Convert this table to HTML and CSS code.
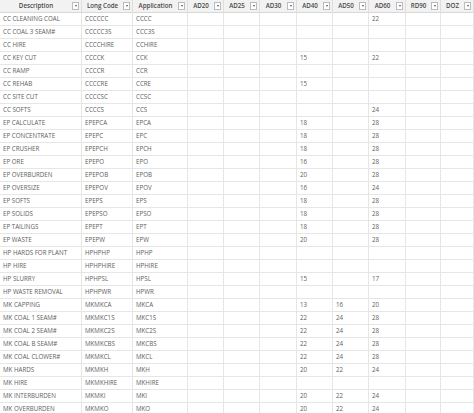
FILE: index.html
```html
<!DOCTYPE html>
<html>
<head>
<meta charset="utf-8">
<link rel="stylesheet" href="styles.css">
</head>
<body>
<div class="sheet">
  <div class="row head">
    <div class="th"><span class="lbl">Description</span><span class="dd"></span></div>
    <div class="th"><span class="lbl">Long Code</span><span class="dd"></span></div>
    <div class="th"><span class="lbl">Application</span><span class="dd"></span></div>
    <div class="th"><span class="lbl">AD20</span><span class="dd"></span></div>
    <div class="th"><span class="lbl">AD25</span><span class="dd"></span></div>
    <div class="th"><span class="lbl">AD30</span><span class="dd"></span></div>
    <div class="th"><span class="lbl">AD40</span><span class="dd"></span></div>
    <div class="th"><span class="lbl">AD50</span><span class="dd"></span></div>
    <div class="th"><span class="lbl">AD60</span><span class="dd"></span></div>
    <div class="th"><span class="lbl">RD90</span><span class="dd"></span></div>
    <div class="th"><span class="lbl">DOZ</span><span class="dd"></span></div>
  </div>
  <div class="row"><span>CC CLEANING COAL</span><span>CCCCCC</span><span>CCCC</span><span></span><span></span><span></span><span></span><span></span><span>22</span><span></span><span></span></div>
  <div class="row"><span>CC COAL 3 SEAM#</span><span>CCCCC3S</span><span>CCC3S</span><span></span><span></span><span></span><span></span><span></span><span></span><span></span><span></span></div>
  <div class="row"><span>CC HIRE</span><span>CCCCHIRE</span><span>CCHIRE</span><span></span><span></span><span></span><span></span><span></span><span></span><span></span><span></span></div>
  <div class="row"><span>CC KEY CUT</span><span>CCCCK</span><span>CCK</span><span></span><span></span><span></span><span>15</span><span></span><span>22</span><span></span><span></span></div>
  <div class="row"><span>CC RAMP</span><span>CCCCR</span><span>CCR</span><span></span><span></span><span></span><span></span><span></span><span></span><span></span><span></span></div>
  <div class="row"><span>CC REHAB</span><span>CCCCRE</span><span>CCRE</span><span></span><span></span><span></span><span>15</span><span></span><span></span><span></span><span></span></div>
  <div class="row"><span>CC SITE CUT</span><span>CCCCSC</span><span>CCSC</span><span></span><span></span><span></span><span></span><span></span><span></span><span></span><span></span></div>
  <div class="row"><span>CC SOFTS</span><span>CCCCS</span><span>CCS</span><span></span><span></span><span></span><span></span><span></span><span>24</span><span></span><span></span></div>
  <div class="row"><span>EP CALCULATE</span><span>EPEPCA</span><span>EPCA</span><span></span><span></span><span></span><span>18</span><span></span><span>28</span><span></span><span></span></div>
  <div class="row"><span>EP CONCENTRATE</span><span>EPEPC</span><span>EPC</span><span></span><span></span><span></span><span>18</span><span></span><span>28</span><span></span><span></span></div>
  <div class="row"><span>EP CRUSHER</span><span>EPEPCH</span><span>EPCH</span><span></span><span></span><span></span><span>18</span><span></span><span>28</span><span></span><span></span></div>
  <div class="row"><span>EP ORE</span><span>EPEPO</span><span>EPO</span><span></span><span></span><span></span><span>16</span><span></span><span>28</span><span></span><span></span></div>
  <div class="row"><span>EP OVERBURDEN</span><span>EPEPOB</span><span>EPOB</span><span></span><span></span><span></span><span>20</span><span></span><span>28</span><span></span><span></span></div>
  <div class="row"><span>EP OVERSIZE</span><span>EPEPOV</span><span>EPOV</span><span></span><span></span><span></span><span>16</span><span></span><span>24</span><span></span><span></span></div>
  <div class="row"><span>EP SOFTS</span><span>EPEPS</span><span>EPS</span><span></span><span></span><span></span><span>18</span><span></span><span>28</span><span></span><span></span></div>
  <div class="row"><span>EP SOLIDS</span><span>EPEPSO</span><span>EPSO</span><span></span><span></span><span></span><span>18</span><span></span><span>28</span><span></span><span></span></div>
  <div class="row"><span>EP TAILINGS</span><span>EPEPT</span><span>EPT</span><span></span><span></span><span></span><span>18</span><span></span><span>28</span><span></span><span></span></div>
  <div class="row"><span>EP WASTE</span><span>EPEPW</span><span>EPW</span><span></span><span></span><span></span><span>20</span><span></span><span>28</span><span></span><span></span></div>
  <div class="row"><span>HP HARDS FOR PLANT</span><span>HPHPHP</span><span>HPHP</span><span></span><span></span><span></span><span></span><span></span><span></span><span></span><span></span></div>
  <div class="row"><span>HP HIRE</span><span>HPHPHIRE</span><span>HPHIRE</span><span></span><span></span><span></span><span></span><span></span><span></span><span></span><span></span></div>
  <div class="row"><span>HP SLURRY</span><span>HPHPSL</span><span>HPSL</span><span></span><span></span><span></span><span>15</span><span></span><span>17</span><span></span><span></span></div>
  <div class="row"><span>HP WASTE REMOVAL</span><span>HPHPWR</span><span>HPWR</span><span></span><span></span><span></span><span></span><span></span><span></span><span></span><span></span></div>
  <div class="row"><span>MK CAPPING</span><span>MKMKCA</span><span>MKCA</span><span></span><span></span><span></span><span>13</span><span>16</span><span>20</span><span></span><span></span></div>
  <div class="row"><span>MK COAL 1 SEAM#</span><span>MKMKC1S</span><span>MKC1S</span><span></span><span></span><span></span><span>22</span><span>24</span><span>28</span><span></span><span></span></div>
  <div class="row"><span>MK COAL 2 SEAM#</span><span>MKMKC2S</span><span>MKC2S</span><span></span><span></span><span></span><span>22</span><span>24</span><span>28</span><span></span><span></span></div>
  <div class="row"><span>MK COAL B SEAM#</span><span>MKMKCBS</span><span>MKCBS</span><span></span><span></span><span></span><span>22</span><span>24</span><span>28</span><span></span><span></span></div>
  <div class="row"><span>MK COAL CLOWER#</span><span>MKMKCL</span><span>MKCL</span><span></span><span></span><span></span><span>22</span><span>24</span><span>28</span><span></span><span></span></div>
  <div class="row"><span>MK HARDS</span><span>MKMKH</span><span>MKH</span><span></span><span></span><span></span><span>20</span><span>22</span><span>24</span><span></span><span></span></div>
  <div class="row"><span>MK HIRE</span><span>MKMKHIRE</span><span>MKHIRE</span><span></span><span></span><span></span><span></span><span></span><span></span><span></span><span></span></div>
  <div class="row"><span>MK INTERBURDEN</span><span>MKMKI</span><span>MKI</span><span></span><span></span><span></span><span>20</span><span>22</span><span>24</span><span></span><span></span></div>
  <div class="row"><span>MK OVERBURDEN</span><span>MKMKO</span><span>MKO</span><span></span><span></span><span></span><span>20</span><span>22</span><span>24</span><span></span><span></span></div>
</div>
</body>
</html>
```
FILE: styles.css
```css
html, body {
  margin: 0;
  padding: 0;
  background: #ffffff;
  overflow: hidden;
}
.sheet {
  width: 474px;
  font-family: "Open Sans", "Noto Sans", sans-serif;
  font-size: 6.2px;
  color: #5e5e5e;
}
.row {
  display: grid;
  grid-template-columns: 82px 51px 55px 36px 36px 37px 36px 36px 37px 35px 33px;
  height: 13px;
}
.row > span {
  box-sizing: border-box;
  height: 13px;
  line-height: 12px;
  padding-left: 3px;
  border-right: 1px solid #e6e6e6;
  border-bottom: 1px solid #e6e6e6;
  white-space: nowrap;
  overflow: hidden;
}
.head {
  background: #f2f2f2;
}
.th {
  box-sizing: border-box;
  height: 13px;
  display: flex;
  align-items: center;
  border-right: 1px solid #dedede;
  border-bottom: 1px solid #d8d8d8;
  padding-right: 2px;
  overflow: hidden;
}
.lbl {
  flex: 1;
  text-align: center;
  font-weight: 600;
  color: #4a4a4a;
  white-space: nowrap;
  line-height: 12px;
}
.dd {
  box-sizing: border-box;
  flex: none;
  width: 7px;
  height: 8px;
  background: #ffffff;
  border: 1px solid #bcbcbc;
  display: flex;
  align-items: center;
  justify-content: center;
}
.dd::after {
  content: "";
  width: 0;
  height: 0;
  border-left: 1.5px solid transparent;
  border-right: 1.5px solid transparent;
  border-top: 2px solid #555555;
}
```
